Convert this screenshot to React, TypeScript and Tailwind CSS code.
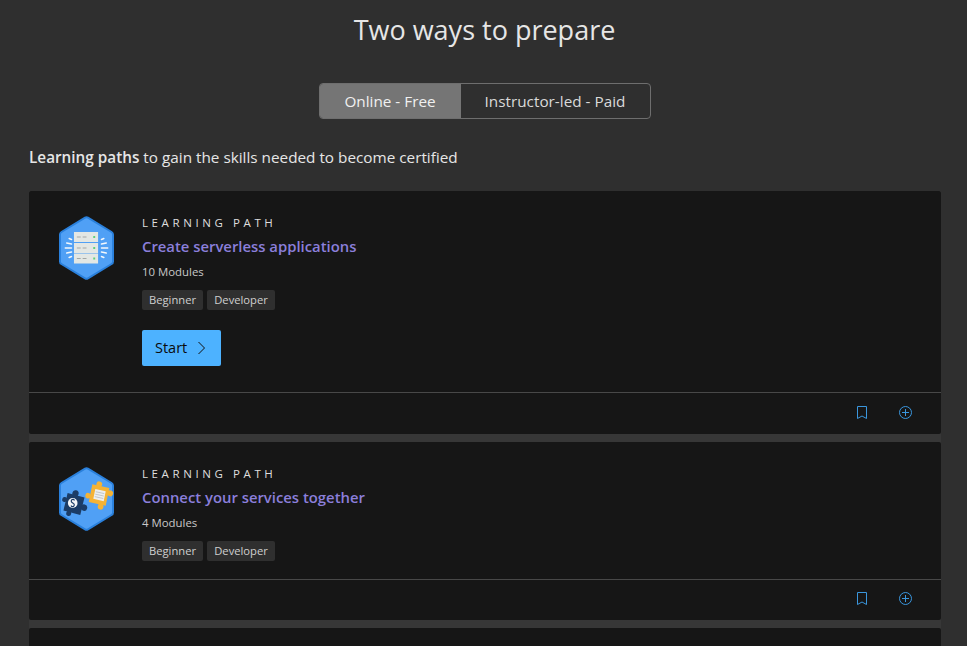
const hexPath = 'M25.500 1.700a3 3 0 0 1 3 0L53 16a3 3 0 0 1 1.500 2.600V45.400a3 3 0 0 1-1.500 2.600L28.500 62.300a3 3 0 0 1-3 0L1 48a3 3 0 0 1-1.500-2.600V18.600A3 3 0 0 1 1 16Z'

function ServerBadge() {
  return (
    <svg width="55" height="64" viewBox="-1.5 0 57 64" preserveAspectRatio="none" className="block">
      <path d={hexPath} fill="#50a0f5" stroke="#2a80dc" strokeWidth="2" />
      <g transform="translate(-1 0)">
        <g fill="#e3e7e4">
          <rect x="15" y="16" width="25" height="10" />
          <rect x="15" y="27" width="25" height="10" />
          <rect x="15" y="37.500" width="25" height="10" />
        </g>
        <g fill="#a3a8a6">
          <rect x="18" y="20.500" width="4" height="1" />
          <rect x="24" y="20.500" width="4" height="1" />
          <rect x="18" y="31.500" width="4" height="1" />
          <rect x="24" y="31.500" width="4" height="1" />
          <rect x="18" y="42" width="4" height="1" />
          <rect x="24" y="42" width="4" height="1" />
        </g>
        <g fill="#5fd07a">
          <rect x="35" y="20" width="2" height="2" />
          <rect x="35" y="31" width="2" height="2" />
          <rect x="35" y="41.500" width="2" height="2" />
        </g>
        <g stroke="#f4f8fc" strokeWidth="1.500" strokeLinecap="round">
          <path d="M6 32h6.500M7.500 27l5 1M7.500 37l5-1M10 22.500l2.500 1M10 41.500l2.500-1" />
          <path d="M43.500 32h6.500M43.500 28l5-1M43.500 36l5 1M43.500 23.500l2.500-1M43.500 40.500l2.500 1" />
        </g>
      </g>
    </svg>
  )
}

function PuzzleBadge() {
  return (
    <svg width="55" height="64" viewBox="-1.5 0 57 64" preserveAspectRatio="none" className="block">
      <path d={hexPath} fill="#50a0f5" stroke="#2a80dc" strokeWidth="2" />
      <g fill="#1b3c66" transform="rotate(14 14 37) translate(-1 0)">
        <rect x="6" y="28" width="18" height="18" />
        <circle cx="14" cy="26.500" r="3.300" />
        <circle cx="26" cy="38" r="3.300" />
        <circle cx="12" cy="47.500" r="2.600" />
        <circle cx="4.500" cy="35" r="2.500" />
      </g>
      <circle cx="12.700" cy="36" r="5" fill="#f4f6f8" />
      <path d="M11 38.500a1.700 1.700 0 1 0 2.500-2l-1.500-1a1.700 1.700 0 1 1 2.500-2" fill="none" stroke="#1b3c66" strokeWidth="1.200" />
      <g fill="#f5b335" transform="rotate(12 40 28) translate(-1 0)">
        <rect x="32" y="19" width="18" height="18" />
        <circle cx="39" cy="17.500" r="3" />
        <circle cx="52" cy="24" r="3" />
        <circle cx="45" cy="39" r="3" />
        <circle cx="30" cy="31" r="2.800" />
      </g>
      <g transform="rotate(12 40 28) translate(-1 0)">
        <rect x="36" y="23" width="11" height="10" fill="#eceff0" />
        <path d="M37 25.500h9M37 28h9M37 30.500h9" stroke="#b9bec0" strokeWidth="0.800" />
      </g>
    </svg>
  )
}

function BookmarkIcon() {
  return (
    <svg width="10" height="13" viewBox="0 0 10 13" fill="none" stroke="#3a96dd" strokeWidth="1" className="block">
      <path d="M.5.5h9v12L5 10 .5 12.500z" />
    </svg>
  )
}

function AddIcon() {
  return (
    <svg width="13" height="13" viewBox="0 0 13 13" fill="none" stroke="#3a96dd" strokeWidth="1" className="block">
      <circle cx="6.500" cy="6.500" r="6" />
      <path d="M6.500 3v7M3 6.500h7" />
    </svg>
  )
}

function StartChevron() {
  return (
    <svg width="9" height="14" viewBox="0 0 9 14" fill="none" stroke="#111111" strokeWidth="1" className="ml-[10px] block">
      <path d="M1.500 1l6 6-6 6" />
    </svg>
  )
}

function PathCard({ icon, title, modules, start }: { icon: React.ReactNode; title: string; modules: string; start?: boolean }) {
  return (
    <div className="rounded-[2px] bg-[#161616]">
      <div className={`flex pl-[30px] pt-[25px] ${start ? 'h-[201px]' : 'h-[137px]'}`}>
        <div className="w-[83px] shrink-0">{icon}</div>
        <div className="flex flex-col items-start">
          <p className="h-[14px] text-[11.500px] leading-[14px] tracking-[3.6px] text-[#dedede]">LEARNING PATH</p>
          <h2 className="mt-[4px] h-[24px] text-[14.850px] font-semibold leading-[24px] text-[#8b7fdb]">{title}</h2>
          <p className="mt-[6px] h-[16px] text-[11.400px] leading-[16px] text-[#c8c8c8]">{modules}</p>
          <div className="mt-[10px] flex gap-1">
            <span className="flex h-[20px] w-[61px] items-center justify-center rounded-[2px] bg-[#2f2f2f] text-[11.200px] text-[#d0d0d0]">Beginner</span>
            <span className="flex h-[20px] w-[68px] items-center justify-center rounded-[2px] bg-[#2f2f2f] text-[11.200px] text-[#d0d0d0]">Developer</span>
          </div>
          {start && (
            <button className="mt-[20px] flex h-[36px] w-[79px] items-center rounded-[2px] bg-[#4db2ff] pl-[13px] text-[14.500px] text-[#0b0b0b]">
              Start
              <StartChevron />
            </button>
          )}
        </div>
      </div>
      <div className={`flex items-center justify-end border-t border-[#484848] pr-[29px] ${start ? 'h-[42px] pb-[2px]' : 'h-[41px] pb-[3px]'}`}>
        <BookmarkIcon />
        <span className="ml-[32px]">
          <AddIcon />
        </span>
      </div>
    </div>
  )
}

export default function App() {
  return (
    <div className="h-screen w-full overflow-hidden bg-[#2f2f2f] font-['Open_Sans','Noto_Sans',sans-serif] text-[#e6e6e6]">
      <h1 className="h-[59px] pl-[2px] text-center text-[27px] font-medium leading-[59px] text-[#e6e6e6]">Two ways to prepare</h1>
      <div className="ml-[2px] mt-[24px] flex justify-center">
        <div className="flex h-[36px] w-[332px] overflow-hidden rounded-[4px] border border-[#6e6e6e] text-[15.300px]">
          <div className="flex w-[141px] items-center justify-center bg-[#757575] text-[#f0f0f0]">Online - Free</div>
          <div className="flex flex-1 items-center justify-center text-[#dadada]">Instructor-led - Paid</div>
        </div>
      </div>
      <p className="ml-[29px] mt-[27px] h-[22px] text-[15.300px] leading-[22px] text-[#e6e6e6]">
        <b className="font-semibold">Learning paths</b> to gain the skills needed to become certified
      </p>
      <div className="ml-[29px] mt-[23px] flex w-[912px] flex-col gap-2 bg-[#373737]">
        <PathCard icon={<ServerBadge />} title="Create serverless applications" modules="10 Modules" start />
        <PathCard icon={<PuzzleBadge />} title="Connect your services together" modules="4 Modules" />
        <div className="h-[60px] rounded-[2px] bg-[#161616]" />
      </div>
    </div>
  )
}
